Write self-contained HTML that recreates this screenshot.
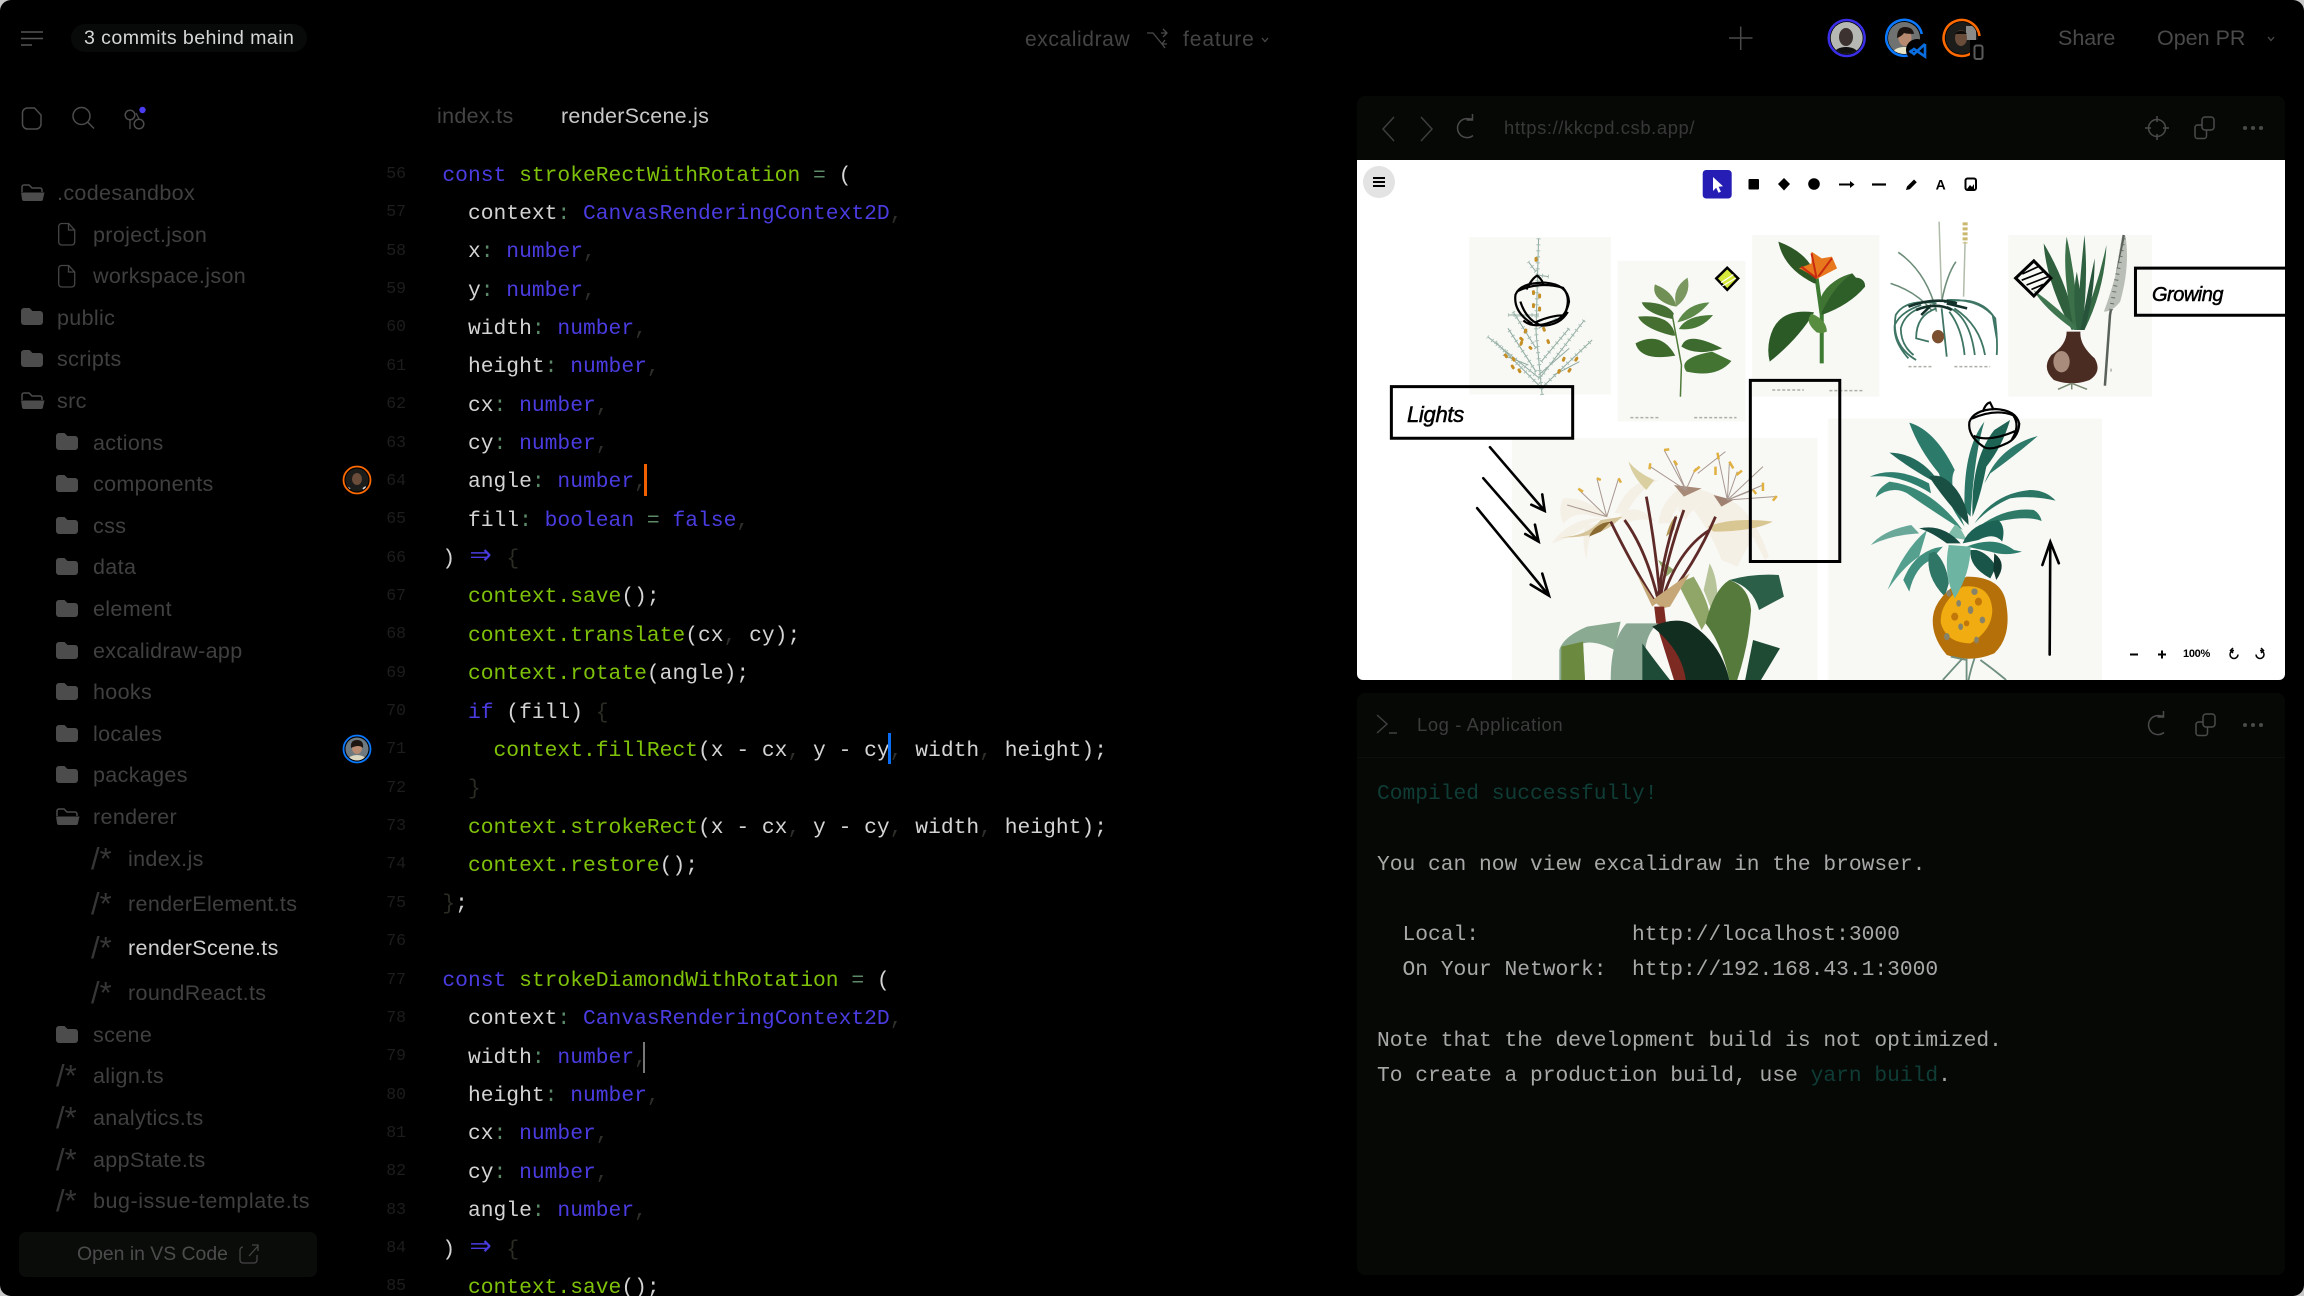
<!DOCTYPE html>
<html><head><meta charset="utf-8"><title>CodeSandbox</title>
<style>
*{margin:0;padding:0;box-sizing:border-box}
html,body{width:2304px;height:1296px;overflow:hidden;background:#c8c8c8}
#w{position:absolute;left:0;top:0;width:2304px;height:1296px;background:#000;border-radius:11px;overflow:hidden;font-family:"Liberation Sans",sans-serif}
.t{position:absolute;white-space:pre;line-height:30px;height:30px}
.s{font-size:21.5px;color:#404040;letter-spacing:.35px}
.i{font-size:31px;color:#363636}
pre{font-family:"Liberation Mono",monospace}
#code{position:absolute;left:442.4px;top:156.5px;font-size:21.3px;line-height:38.36px;color:#d4d4d4;white-space:pre}
#nums{position:absolute;left:376px;width:30px;top:155px;text-align:right;font-size:16.5px;line-height:38.36px;color:#1d1d1d;font-family:"Liberation Mono",monospace}
.k{color:#4a3ce0}.f{color:#7fc20a}.c{color:#2e2e2a}.d{color:#2c2c24}.o{color:#5c8a68}
.ar{display:inline-block;width:25.6px;text-align:center;color:#4a3ce0;font-size:36px;line-height:20px;vertical-align:-1px;overflow:visible}
.p{position:absolute;background:#060806;border-radius:8px}
#term{position:absolute;left:1377px;top:777.4px;font-size:21.25px;line-height:35.2px;color:#a8a8a8;white-space:pre}
.g{color:#0f3d36}
#prev{position:absolute;left:1357px;top:160px;width:928px;height:520px;background:#fff;overflow:hidden;border-radius:0 0 6px 6px}
#prev svg{position:absolute;overflow:hidden}
#prev svg *{vector-effect:non-scaling-stroke}
.z3{left:-7px;top:-10px;width:954px;height:540px}
.z9{left:3px;top:55px;width:800px;height:225px}
.z10{left:143px;top:250px;width:620px;height:270px}
.hw{position:absolute;font-family:"Liberation Sans",sans-serif;font-style:italic;color:#000;white-space:pre;-webkit-text-stroke:.5px #000}
#ic{position:absolute;left:0;top:0;width:2304px;height:1296px;pointer-events:none}
</style></head><body><div id="w">

<div class="t" style="left:70.5px;top:24px;width:236px;height:28px;background:#070a08;border-radius:14px"></div>
<div class="t" style="left:84px;top:23px;font-size:19.6px;color:#d6d6d6;letter-spacing:.42px">3 commits behind main</div>
<div class="t" style="left:1025px;top:25px;font-size:21px;color:#444;letter-spacing:.6px">excalidraw</div>
<div class="t" style="left:1183px;top:25px;font-size:21px;color:#444;letter-spacing:.9px">feature</div>
<div class="t" style="left:2058px;top:23px;font-size:21.5px;color:#4a4a4a">Share</div>
<div class="t" style="left:2157px;top:23px;font-size:21.5px;color:#4a4a4a">Open PR</div>

<div class="t" style="left:437px;top:101px;font-size:21.5px;color:#444;letter-spacing:.3px">index.ts</div>
<div class="t" style="left:561px;top:101px;font-size:21.5px;color:#c8c8c8;letter-spacing:.25px">renderScene.js</div>

<div class="t s" style="left:57px;top:178px">.codesandbox</div>
<div class="t s" style="left:93px;top:220px">project.json</div>
<div class="t s" style="left:93px;top:261px">workspace.json</div>
<div class="t s" style="left:57px;top:303px">public</div>
<div class="t s" style="left:57px;top:344px">scripts</div>
<div class="t s" style="left:57px;top:386px">src</div>
<div class="t s" style="left:93px;top:428px">actions</div>
<div class="t s" style="left:93px;top:469px">components</div>
<div class="t s" style="left:93px;top:511px">css</div>
<div class="t s" style="left:93px;top:552px">data</div>
<div class="t s" style="left:93px;top:594px">element</div>
<div class="t s" style="left:93px;top:636px">excalidraw-app</div>
<div class="t s" style="left:93px;top:677px">hooks</div>
<div class="t s" style="left:93px;top:719px">locales</div>
<div class="t s" style="left:93px;top:760px">packages</div>
<div class="t s" style="left:93px;top:802px">renderer</div>
<div class="t s" style="left:128px;top:844px">index.js</div>
<div class="t s" style="left:128px;top:889px">renderElement.ts</div>
<div class="t s" style="left:128px;top:933px;color:#d0d0d0">renderScene.ts</div>
<div class="t s" style="left:128px;top:978px">roundReact.ts</div>
<div class="t s" style="left:93px;top:1020px">scene</div>
<div class="t s" style="left:93px;top:1061px">align.ts</div>
<div class="t s" style="left:93px;top:1103px">analytics.ts</div>
<div class="t s" style="left:93px;top:1145px">appState.ts</div>
<div class="t s" style="left:93px;top:1186px;letter-spacing:.55px">bug-issue-template.ts</div>

<div class="t i" style="left:91px;top:844px">/*</div>
<div class="t i" style="left:91px;top:889px">/*</div>
<div class="t i" style="left:91px;top:933px">/*</div>
<div class="t i" style="left:91px;top:978px">/*</div>
<div class="t i" style="left:56px;top:1061px">/*</div>
<div class="t i" style="left:56px;top:1103px">/*</div>
<div class="t i" style="left:56px;top:1145px">/*</div>
<div class="t i" style="left:56px;top:1186px">/*</div>

<div class="t" style="left:19px;top:1232px;width:298px;height:45px;background:#0a0c0a;border-radius:7px"></div>
<div class="t" style="left:77px;top:1239px;font-size:19.4px;color:#4c4c4c">Open in VS Code</div>

<div id="nums">56
57
58
59
60
61
62
63
64
65
66
67
68
69
70
71
72
73
74
75
76
77
78
79
80
81
82
83
84
85</div>
<pre id="code"><span class="k">const</span> <span class="f">strokeRectWithRotation</span> <span class="o">=</span> (
  context<span class="o">:</span> <span class="k">CanvasRenderingContext2D</span><span class="c">,</span>
  x<span class="o">:</span> <span class="k">number</span><span class="c">,</span>
  y<span class="o">:</span> <span class="k">number</span><span class="c">,</span>
  width<span class="o">:</span> <span class="k">number</span><span class="c">,</span>
  height<span class="o">:</span> <span class="k">number</span><span class="c">,</span>
  cx<span class="o">:</span> <span class="k">number</span><span class="c">,</span>
  cy<span class="o">:</span> <span class="k">number</span><span class="c">,</span>
  angle<span class="o">:</span> <span class="k">number</span><span class="c">,</span>
  fill<span class="o">:</span> <span class="k">boolean</span> <span class="o">=</span> <span class="k">false</span><span class="c">,</span>
) <span class="ar">⇒</span> <span class="d">{</span>
  <span class="f">context.save</span>();
  <span class="f">context.translate</span>(cx<span class="c">,</span> cy);
  <span class="f">context.rotate</span>(angle);
  <span class="k">if</span> (fill) <span class="d">{</span>
    <span class="f">context.fillRect</span>(x - cx<span class="c">,</span> y - cy<span class="c">,</span> width<span class="c">,</span> height);
  <span class="d">}</span>
  <span class="f">context.strokeRect</span>(x - cx<span class="c">,</span> y - cy<span class="c">,</span> width<span class="c">,</span> height);
  <span class="f">context.restore</span>();
<span class="d">}</span>;

<span class="k">const</span> <span class="f">strokeDiamondWithRotation</span> <span class="o">=</span> (
  context<span class="o">:</span> <span class="k">CanvasRenderingContext2D</span><span class="c">,</span>
  width<span class="o">:</span> <span class="k">number</span><span class="c">,</span>
  height<span class="o">:</span> <span class="k">number</span><span class="c">,</span>
  cx<span class="o">:</span> <span class="k">number</span><span class="c">,</span>
  cy<span class="o">:</span> <span class="k">number</span><span class="c">,</span>
  angle<span class="o">:</span> <span class="k">number</span><span class="c">,</span>
) <span class="ar">⇒</span> <span class="d">{</span>
  <span class="f">context.save</span>();</pre>

<div class="t" style="left:644px;top:464px;width:3px;height:32px;background:#f06000"></div>
<div class="t" style="left:888px;top:733px;width:3px;height:31px;background:#0a6cf0"></div>
<div class="t" style="left:643px;top:1042px;width:2px;height:31px;background:#777"></div>

<div class="p" style="left:1357px;top:96px;width:928px;height:70px"></div>
<div class="t" style="left:1504px;top:113px;font-size:18.4px;color:#383838;letter-spacing:.6px">https://kkcpd.csb.app/</div>

<div id="prev">
<svg class="z3" viewBox="0 0 1568 1568" preserveAspectRatio="none">
<g fill="#f8f8f5"><rect x="196" y="253" width="233" height="457"/><rect x="440" y="322" width="210" height="466"/><rect x="661" y="247" width="209" height="469"/><rect x="1082" y="247" width="236" height="469"/><rect x="266" y="836" width="502" height="720"/><rect x="786" y="780" width="450" height="780"/></g>
</svg>

<svg class="z9" viewBox="0 0 1568 675" preserveAspectRatio="none">
<!-- plant 1 -->
<g fill="none" stroke="#8faaa0" stroke-width="1">
<path id="b1" d="M357 540L345 350L350 70M350 510L265 380M352 490L250 365M345 470L290 340M355 520L455 375M352 490L440 315M355 440L410 340M345 400L300 290M350 300L290 300M345 170L330 140M345 180L370 185M350 480L410 400M330 450L280 420M380 480L430 440M350 340L385 310"/>
</g>
<path d="M357 540L345 350L350 70M350 510L265 380M352 490L250 365M345 470L290 340M355 520L455 375M352 490L440 315M355 440L410 340M345 400L300 290M350 300L290 300M345 170L330 140M345 180L370 185" fill="none" stroke="#a4bdb2" stroke-width="4" stroke-dasharray="1 5"/>
<path d="M345 130V165M340 230V300M352 240V290M325 345L315 390M360 340L370 385M285 420L305 470M300 430L320 490M400 430L385 490M425 430L405 480M315 370L335 400" fill="none" stroke="#c58f25" stroke-width="3" stroke-linecap="round" stroke-dasharray="2 11"/>
<!-- plant 2 -->
<path d="M628 545L630 450L612 300" fill="none" stroke="#4f7a3a" stroke-width="1.5"/>
<path d="M610 272Q570 250 578 208Q615 230 620 275Z" fill="#6f8f55"/>
<path d="M620 275Q610 220 642 188Q650 240 620 275Z" fill="#7a9860"/>
<path d="M612 312Q560 295 552 262Q600 260 615 295Z" fill="#466f34"/>
<path d="M622 322Q640 265 685 262Q660 310 622 322Z" fill="#5d8a48"/>
<path d="M612 362Q555 340 545 305Q610 295 618 362Z" fill="#446f30"/>
<path d="M625 342Q640 300 692 300Q665 350 625 342Z" fill="#4a7a38"/>
<path d="M618 422Q550 440 540 385Q590 345 618 422Z" fill="#3e6a2c"/>
<path d="M630 395Q640 345 710 400Q660 425 630 395Z" fill="#3d6a2e"/>
<path d="M640 470Q620 430 690 410L728 438Q700 490 640 470Z" fill="#437432"/>
<g stroke="#aeaea8" stroke-width="1.500" stroke-dasharray="3 2"><path d="M530 608H585M655 608H738M808 525H870M920 527H985M1075 455H1120M1165 455H1235M1472 470V455"/></g>
<!-- plant 3 -->
<path d="M905 445V300L895 190" fill="none" stroke="#3d7a32" stroke-width="4"/>
<path d="M890 205Q830 160 820 80Q890 120 895 205Z" fill="#2d5826"/>
<path d="M895 192Q870 165 860 160L885 145L885 110L905 130L925 125L935 160Q910 180 895 192Z" fill="#e8781e"/>
<path d="M895 190L865 155M895 190L885 115M898 185L925 130" stroke="#c92a10" stroke-width="2" fill="none"/>
<path d="M905 300Q900 200 965 175L972 188Q990 190 990 215Q960 270 905 300Z" fill="#2f5f28"/>
<path d="M900 262Q910 200 965 175Q930 210 905 292Z" fill="#3f7433"/>
<path d="M890 292Q830 280 810 340Q795 390 803 440Q860 370 890 292Z" fill="#2c5a26"/>
<path d="M895 352Q870 320 885 296Q915 315 915 350L905 355Z" fill="#588d40"/>
<!-- plant 4 -->
<g fill="none" stroke="#b0bcaa" stroke-width="1.500"><path d="M1135 20L1140 250M1186 80L1183 245"/></g>
<path d="M1186 22V85" stroke="#c9b86e" stroke-width="5" stroke-dasharray="3 2"/>
<g fill="none" stroke="#6d8d7a" stroke-width="1.600"><path d="M1130 290Q1110 170 1055 112M1140 260Q1150 180 1168 140M1120 285Q1090 230 1040 205"/></g>
<g fill="none" stroke="#3f7565" stroke-width="1.800">
<path d="M1130 265Q1070 250 1050 300Q1040 390 1090 435M1125 270Q1070 280 1060 340Q1060 390 1085 420M1130 280Q1090 300 1090 370L1115 380M1100 270Q1060 290 1048 330Q1045 380 1075 430M1145 262Q1210 240 1240 300L1248 370M1150 255Q1215 250 1245 310Q1250 380 1248 420M1150 275Q1195 300 1205 420M1140 280L1150 425M1155 290Q1180 340 1185 420M1165 280Q1215 330 1225 420"/>
<path d="M1075 275Q1125 245 1170 265M1090 285Q1130 260 1160 285M1120 270L1100 300M1150 265L1190 280" stroke="#13302a" stroke-width="2.600"/>
</g>
<ellipse cx="1133" cy="365" rx="12" ry="20" fill="#7a5030"/>
<!-- plant 5 -->
<path d="M1395 345Q1345 200 1340 85Q1385 200 1405 340Z" fill="#2f5f3d"/>
<path d="M1400 345Q1375 180 1385 65Q1405 200 1408 345Z" fill="#3b7049"/>
<path d="M1405 345Q1410 200 1420 60Q1428 200 1415 345Z" fill="#2f6040"/>
<path d="M1410 345Q1445 220 1463 90Q1460 220 1420 345Z" fill="#356a45"/>
<path d="M1400 345Q1340 280 1320 225Q1370 280 1410 345Z" fill="#3f7650"/>
<path d="M1405 345Q1395 240 1405 170Q1415 250 1415 345Z" fill="#2f6040"/>
<path d="M1412 345Q1430 200 1440 130Q1440 240 1420 345Z" fill="#26533a"/>
<path d="M1385 350H1412Q1410 390 1440 430Q1455 470 1430 495Q1395 515 1360 495Q1335 460 1355 420Q1385 390 1385 350Z" fill="#4b2c22"/>
<ellipse cx="1375" cy="440" rx="16" ry="32" fill="#a98c7c"/>
<path d="M1395 505L1368 523M1395 505L1395 523M1395 505L1425 523" stroke="#7a8a70" stroke-width="1.500" fill="none"/>
<path d="M1460 512L1470 300L1497 60" stroke="#59615a" stroke-width="2.500" fill="none"/>
<path d="M1458 290Q1480 200 1500 60Q1510 150 1490 260Q1475 290 1458 290Z" fill="#b9bfb6"/>
<path d="M1472 285L1497 70" stroke="#666e66" stroke-width="4" stroke-dasharray="1 5" fill="none"/>
</svg>

<svg class="z10" viewBox="0 0 1568 810" preserveAspectRatio="none">
<!-- lily -->
<g fill="#f5f0e5">
<path d="M280 325Q220 260 160 265Q145 300 160 340Q190 300 240 320Z"/>
<path d="M260 325Q180 320 130 400Q190 380 230 340Z"/>
<path d="M270 330Q220 350 220 450Q205 400 215 350Z"/>
<path d="M290 310Q330 200 400 210Q350 240 320 310Z"/>
<path d="M300 320Q340 270 395 335Q350 320 320 340Z"/>
<path d="M400 340Q410 260 470 225Q500 240 495 260Q440 280 430 340Z" />
<path d="M450 300Q470 220 510 240L560 260Q490 280 470 330Z"/>
<path d="M490 300Q540 250 580 270Q640 300 680 440L670 450L640 380L600 470L560 450Q540 380 490 300Z"/>
</g>
<path d="M150 382Q220 380 255 330L310 320L285 345Q240 385 150 382Z" fill="#d6c49a"/>
<path d="M225 380Q240 340 280 335L255 365Z" fill="#8a6a30"/>
<path d="M325 155Q335 200 370 240L390 210Q350 190 325 155Z" fill="#d9cfa0"/>
<path d="M525 350Q590 320 690 335Q640 365 540 365Z" fill="#d9c793"/>
<path d="M420 380Q430 330 448 315L440 360Z" fill="#b59a5a"/>
<path d="M440 225L510 235L465 260Z" fill="#a88a78"/><path d="M540 255L590 270L560 290Z" fill="#a08070"/>
<g fill="none" stroke="#a89890" stroke-width="1">
<path d="M270 320L200 240M270 320L245 205M270 320L300 205M270 320L170 285M270 320L200 295M470 240L415 120M470 240L440 155M470 240L380 170M470 240L495 175M575 270L550 130M575 270L580 160M575 270L600 185M575 270L665 170M575 270L695 260M575 270L640 240M575 270L665 225M500 190L570 125"/>
</g>
<g stroke="#e0b040" stroke-width="2.500" fill="none"><path d="M415 120L428 118M380 160L378 178M440 152L448 165M490 185L505 170M550 128L553 148M580 155L590 175M598 195L612 182M665 218V243M690 272L700 258M640 240L648 252M245 205L255 210M300 205L306 218M198 236L210 245M545 170V195"/></g>
<path d="M450 520L490 500Q530 580 530 620L510 660Q480 590 450 520Z" fill="#8fa668"/>
<path d="M515 540L530 460Q550 500 550 570L535 600Z" fill="#b7c49a"/>
<path d="M520 640Q540 540 580 510Q630 530 635 600Q630 700 600 810H580Q560 700 520 640Z" fill="#567a3c"/>
<path d="M580 510Q640 490 705 495L718 560L655 600Q640 530 580 510Z" fill="#2c5f48"/>
<path d="M400 450Q430 470 440 480L420 500Z" fill="#8fa668"/>
<g fill="none" stroke="#5e2a28" stroke-width="2.800">
<path d="M280 335Q340 480 395 580M315 330Q370 420 400 570M370 260Q395 420 405 570M465 300Q420 450 405 570M445 320Q410 450 400 570M530 360Q450 420 410 570M545 320Q490 470 415 575"/>
</g>
<path d="M385 570Q420 540 480 490L430 590L410 595ZM345 490L395 580L385 590Z" fill="#c6a878"/>
<path d="M390 590H415L420 640L480 810H440L395 640Z" fill="#7c2a22"/>
<path d="M150 810V720Q160 680 220 650L305 635L290 720Q240 690 210 700L215 810Z" fill="#8aab92"/>
<path d="M155 810V710L210 695L215 810Z" fill="#6b8a3f"/>
<path d="M280 810Q280 690 320 640L400 640Q350 690 375 810Z" fill="#88a692"/>
<path d="M360 700Q390 750 430 810H360Z" fill="#1e4a38"/>
<path d="M385 650Q440 620 480 640Q560 700 580 810H470Q460 720 385 650Z" fill="#122e20"/>
<path d="M620 810L640 690L708 715L660 810Z" fill="#1f4a34"/>

<!-- pineapple -->
<path d="M1175 350Q1130 220 1150 180Q1100 60 1035 38Q1060 120 1110 190Q1130 280 1175 350Z" fill="#2b7a6a"/>
<path d="M1110 215Q1060 130 985 128Q1030 170 1090 210Z" fill="#236b5c"/>
<path d="M1085 220Q1000 165 935 200Q1010 190 1090 250Z" fill="#2f7f6f"/>
<path d="M1170 360Q1090 230 985 215Q955 235 950 262Q990 225 1030 250Q1090 300 1170 360Z" fill="#3b8a78"/>
<path d="M1225 220Q1260 110 1360 78Q1310 130 1240 190Z" fill="#2d7a6a"/>
<path d="M1175 300Q1170 120 1225 35Q1200 130 1190 320Z" fill="#2a7565"/>
<path d="M1195 320Q1190 150 1250 60L1290 30Q1270 110 1230 170Q1215 260 1195 320Z" fill="#1e6455"/>
<path d="M1085 200Q1120 185 1155 240Q1185 290 1185 345Q1130 280 1085 200Z" fill="#1a5044"/>
<path d="M1200 340Q1250 250 1340 240Q1380 240 1405 272Q1340 255 1290 265Q1240 290 1200 340Z" fill="#2b7565"/>
<path d="M1210 350Q1280 290 1350 300Q1365 310 1370 333Q1320 310 1210 350Z" fill="#2e7a67"/>
<path d="M1040 345Q970 360 938 405Q990 375 1060 370Z" fill="#6aa99a"/>
<path d="M1150 345Q1160 340 1180 390L1130 380Z" fill="#7fbdaa"/>
<path d="M1080 360Q1020 420 980 540Q1020 470 1060 440Z" fill="#55a08f"/>
<path d="M1120 410Q1050 420 1020 510L1035 545Q1050 470 1090 450Z" fill="#418f7e"/>
<path d="M1060 355Q1120 340 1165 400L1130 400Q1090 365 1060 355Z" fill="#174c42"/>
<path d="M1170 400Q1190 340 1260 330Q1280 350 1270 395Q1250 365 1210 390Z" fill="#1d6355"/>
<path d="M1180 410Q1250 375 1300 420L1320 425Q1280 440 1240 425Z" fill="#2f7d6c"/>
<path d="M1085 430Q1075 500 1125 560L1135 520Q1130 460 1100 425Z" fill="#2f7667"/>
<path d="M1190 420Q1185 470 1240 505L1255 470Q1235 430 1205 420Z" fill="#1a5549"/>
<path d="M1250 430Q1285 460 1255 510L1248 480Z" fill="#12392f"/>
<path d="M1180 500Q1270 500 1280 580Q1295 680 1250 730Q1190 760 1130 735Q1090 680 1095 620Q1100 560 1180 500Z" fill="#b5700a"/>
<path d="M1170 530Q1240 520 1245 600Q1245 660 1190 700Q1130 700 1115 640Q1110 580 1170 530Z" fill="#f0ac10"/>
<path d="M1135 405L1190 410Q1190 490 1150 565Q1120 490 1135 405Z" fill="#6db5a2"/>
<g fill="#87836a"><ellipse cx="1135" cy="550" rx="6" ry="10"/><ellipse cx="1200" cy="545" rx="8" ry="10"/><ellipse cx="1160" cy="580" rx="6" ry="10"/><ellipse cx="1190" cy="600" rx="7" ry="12"/><ellipse cx="1220" cy="630" rx="7" ry="10"/><ellipse cx="1165" cy="650" rx="6" ry="10"/><ellipse cx="1130" cy="680" rx="7" ry="11"/><ellipse cx="1205" cy="690" rx="6" ry="10"/></g>
<g fill="#c2770a"><ellipse cx="1150" cy="620" rx="9" ry="12"/><ellipse cx="1210" cy="575" rx="9" ry="12"/><ellipse cx="1180" cy="640" rx="7" ry="9"/></g>
<path d="M1170 745Q1150 770 1120 810M1180 745V810M1200 745Q1190 780 1185 810M1215 750Q1250 780 1280 810M1140 740L1180 750" stroke="#6f8f80" stroke-width="1.800" fill="none"/>
</svg>

<svg class="z3" viewBox="0 0 1568 1568" preserveAspectRatio="none">
<!-- diamond yellow -->
<path d="M620 342L638 373L620 406L602 373Z" fill="#d6e83a" stroke="#000" stroke-width="2.500"/>
<path d="M610 385L630 362M612 395L634 372" stroke="#fff" stroke-width="1.200"/>
<!-- diamond hatch -->
<path d="M1124 322L1152 372L1124 424L1094 372Z" fill="none" stroke="#000" stroke-width="3"/>
<path d="M1105 360L1132 338M1104 378L1142 352M1112 392L1147 368M1120 405L1140 390" stroke="#000" stroke-width="1.700"/>
<g fill="none" stroke="#000">
<path d="M68 687H366V837H68Z" stroke-width="3"/>
<path d="M1291 343H1540V480H1291Z" stroke-width="3"/>
<path d="M658 669H805V1195H658Z" stroke-width="3"/>
<g stroke-width="2.600" stroke-linecap="round">
<path d="M230 863L320 1048M298 1030L320 1048L316 1000"/>
<path d="M219 953L310 1137M288 1115L310 1137L304 1088"/>
<path d="M209 1040L327 1294M297 1262L327 1294L316 1230"/>
<path d="M1150 1465L1151 1138M1138 1205L1151 1138L1165 1200"/>
</g>
<g stroke-width="2.200">
<path d="M300 505Q268 470 272 420Q280 385 320 385Q358 390 360 440Q355 490 330 500Q300 520 285 495"/>
<path d="M290 405Q300 370 308 365Q318 380 318 395M280 440Q290 495 315 510Q345 510 358 470M275 410Q310 380 350 400Q365 430 352 480Q330 480 305 500"/>
<path d="M1040 860Q1015 830 1018 790Q1025 755 1060 752Q1095 755 1100 795Q1098 840 1075 855Q1050 875 1040 860Z"/>
<path d="M1040 760Q1045 735 1052 733L1058 755M1025 830Q1050 850 1095 815M1022 780Q1060 750 1090 770Q1102 800 1088 840"/>
</g>
</g>
</svg>
<div class="hw" style="left:50px;top:242px;font-size:22px;line-height:26px;letter-spacing:-.3px">Lights</div>
<div class="hw" style="left:795px;top:122px;font-size:20px;line-height:26px;letter-spacing:-.5px">Growing</div>
<div class="hw" style="left:826px;top:486px;font-size:11px;line-height:16px;font-style:normal;font-weight:bold;-webkit-text-stroke:0;letter-spacing:-.3px">100%</div>
</div>

<div class="p" style="left:1357px;top:693px;width:928px;height:582px"></div>
<div class="t" style="left:1357px;top:757px;width:928px;height:1px;background:#0c0f0c"></div>
<div class="t" style="left:1417px;top:710px;font-size:18.4px;color:#3c3c3c;letter-spacing:.6px">Log - Application</div>
<pre id="term"><span class="g">Compiled successfully!</span>

You can now view excalidraw in the browser.

  Local:            http://localhost:3000
  On Your Network:  http://192.168.43.1:3000

Note that the development build is not optimized.
To create a production build, use <span class="g">yarn build</span>.</pre>

<svg id="ic" viewBox="0 0 2304 1296" fill="none">
<defs>
<path id="fc" d="M0 3a3 3 0 0 1 3-3h5.500l3 3h7.500a3 3 0 0 1 3 3v8a3 3 0 0 1-3 3H3a3 3 0 0 1-3-3z" fill="#4c4c4c"/>
<g id="fo"><path d="M1 8V3a2 2 0 0 1 2-2h5l3 3h8a2 2 0 0 1 2 2v2" stroke="#4c4c4c" stroke-width="1.500"/><path d="M0 8.500h23.500l-1.500 6.500a2 2 0 0 1-2 2H3a2 2 0 0 1-2-2z" fill="#4c4c4c"/></g>
<path id="fl" d="M.7 3.500a3 3 0 0 1 3-3h7l6 6.500v12a3 3 0 0 1-3 3h-10a3 3 0 0 1-3-3zM10.500 .5v6.500h6.500" stroke="#454545" stroke-width="1.300"/>
<g id="cp" stroke="#4a4a4a" stroke-width="1.500"><rect x="8" y="-1" width="12" height="13" rx="3"/><path d="M8 7H3.500a2.500 2.500 0 0 0-2.500 2.500V18a2.500 2.500 0 0 0 2.500 2.500H10a2.500 2.500 0 0 0 2.500-2.500V12"/></g>
<g id="rf" stroke="#4a4a4a" stroke-width="1.500"><path d="M9 -9a9.500 9.500 0 1 0 1 15.500"/><path d="M4 -10h6M9.500 -15v6h-6"/></g>
<g id="dt" fill="#4a4a4a"><circle cx="-8" r="2"/><circle r="2"/><circle cx="8" r="2"/></g>
<clipPath id="a1"><circle cx="1846.700" cy="38" r="16"/></clipPath>
<clipPath id="a2"><circle cx="1904" cy="38" r="16"/></clipPath>
<clipPath id="a3"><circle cx="1961.700" cy="38" r="16"/></clipPath>
<clipPath id="a4"><circle cx="357" cy="480" r="11.500"/></clipPath>
<clipPath id="a5"><circle cx="357" cy="749" r="11.500"/></clipPath>
</defs>

<path d="M21 32H43M21 38.500H43M21 45H32" stroke="#555" stroke-width="1.600"/>
<path d="M22.500 113a5 5 0 0 1 5-5h7l6.500 7v9a5 5 0 0 1-5 5h-8.500a5 5 0 0 1-5-5z" stroke="#4c4c4c" stroke-width="1.500"/>
<circle cx="81.500" cy="116" r="8.500" stroke="#4c4c4c" stroke-width="1.500"/><path d="M87.500 122L94 128.500" stroke="#4c4c4c" stroke-width="1.500"/>
<circle cx="130" cy="115" r="4.800" stroke="#4c4c4c" stroke-width="1.500"/><circle cx="139" cy="124" r="4.800" stroke="#4c4c4c" stroke-width="1.500"/><path d="M130 120V129M139 119L136 113" stroke="#4c4c4c" stroke-width="1.300"/>
<circle cx="142.500" cy="110" r="3.200" fill="#4a3cf0"/>

<use href="#fo" x="21" y="184"/>
<use href="#fl" x="58" y="223"/><use href="#fl" x="58" y="265"/>
<use href="#fc" x="21" y="308"/><use href="#fc" x="21" y="350"/>
<use href="#fo" x="21" y="392"/>
<use href="#fc" x="56" y="433"/><use href="#fc" x="56" y="475"/><use href="#fc" x="56" y="517"/><use href="#fc" x="56" y="558"/><use href="#fc" x="56" y="600"/><use href="#fc" x="56" y="642"/><use href="#fc" x="56" y="683"/><use href="#fc" x="56" y="725"/><use href="#fc" x="56" y="766"/>
<use href="#fo" x="56" y="808"/>
<use href="#fc" x="56" y="1026"/>

<path d="M243 1247a3 3 0 0 0-3 3v10a3 3 0 0 0 3 3h11a3 3 0 0 0 3-3v-5M249 1256l9-10M252 1245h6v6" stroke="#444" stroke-width="1.300"/>

<!-- branch + chevrons -->
<path d="M1147 33h6l9 11h5M1161 33h6M1165 40l-3 4 3 4M1163 29l4 4-4 4" stroke="#4a4a4a" stroke-width="1.300"/>
<path d="M1262 38l3 3.500 3-3.500" stroke="#4a4a4a" stroke-width="1.300"/>
<path d="M2268 37l3 3.500 3-3.500" stroke="#4a4a4a" stroke-width="1.300"/>
<path d="M1729 38h23.500M1740.700 26.500v23.500" stroke="#4a4a4a" stroke-width="1.500"/>

<!-- avatars -->
<g clip-path="url(#a1)"><rect x="1830" y="22" width="34" height="32" fill="#b6b8b4"/><ellipse cx="1846" cy="37" rx="7" ry="9" fill="#3c3230"/><path d="M1832 56q3-9 14-9t14 9z" fill="#101010"/></g>
<circle cx="1846.700" cy="38" r="18" stroke="#3a2ee8" stroke-width="2.500"/>
<g clip-path="url(#a2)"><rect x="1888" y="22" width="34" height="32" fill="#6f7270"/><ellipse cx="1905" cy="38" rx="6.500" ry="8" fill="#b88a70"/><path d="M1897 38q0-11 8-11t9 7q-7 0-10-1q-2 3-7 5z" fill="#1d1512"/><path d="M1890 56q4-9 14-9t12 9z" fill="#e8e4c8"/></g>
<path d="M1917 50.500A18 18 0 1 1 1921.800 34" stroke="#0a78ff" stroke-width="2.500"/>
<circle cx="1917" cy="50" r="11" fill="#000"/>
<path d="M1925 44l-11 10-4.500-3.500M1925 44v12.500l-11-7.500-4.500 3.500" stroke="#0a6ee0" stroke-width="2.600"/>
<g clip-path="url(#a3)"><rect x="1945" y="22" width="34" height="32" fill="#1c1c1a"/><rect x="1966" y="26" width="10" height="14" fill="#8a8a88"/><ellipse cx="1961" cy="38" rx="6" ry="8" fill="#6a4c3a"/><path d="M1955 34q6-7 12 0z" fill="#0e0c0a"/></g>
<path d="M1974 51A18 18 0 1 1 1979.500 36" stroke="#ff6a00" stroke-width="2.500"/>
<rect x="1970" y="40" width="20" height="22" fill="#000"/>
<rect x="1974.500" y="45.500" width="8" height="13.500" rx="2" stroke="#5a5a5a" stroke-width="2"/>

<g clip-path="url(#a4)"><rect x="345" y="468" width="24" height="24" fill="#1c1c1a"/><ellipse cx="357" cy="479" rx="5" ry="6" fill="#6a4c3a"/><path d="M346 487l4 2M366 487l-3 2" stroke="#ddd" stroke-width="2"/></g>
<circle cx="357" cy="480" r="13.500" stroke="#ff6a00" stroke-width="1.800"/>
<g clip-path="url(#a5)"><rect x="345" y="737" width="24" height="24" fill="#6f7a80"/><ellipse cx="357" cy="748" rx="5" ry="6" fill="#b88a70"/><path d="M351 748q-1-8 6-8t6 8q-4-4-12 0z" fill="#1d1512"/><path d="M346 762q3-7 11-7t11 7z" fill="#dcd8c0"/></g>
<circle cx="357" cy="749" r="13.500" stroke="#0a78ff" stroke-width="1.800"/>

<!-- browser header -->
<path d="M1394 117l-11 12 11 12M1421 117l11 12-11 12" stroke="#3e3e3e" stroke-width="1.500"/>
<g transform="translate(1463 129)"><use href="#rf"/></g>
<g stroke="#4a4a4a" stroke-width="1.500"><circle cx="2157" cy="128" r="8.500"/><path d="M2157 116v6M2157 134v6M2145 128h6M2163 128h6"/></g>
<use href="#cp" x="2194" y="118"/>
<use href="#dt" x="2253" y="128"/>

<!-- log header -->
<path d="M1377 715l10 9-10 9M1389 733h8" stroke="#404040" stroke-width="1.400"/>
<g transform="translate(2154 726)"><use href="#rf"/></g>
<use href="#cp" x="2195" y="715"/>
<use href="#dt" x="2253" y="725"/>

<!-- excalidraw toolbar -->
<rect x="1702.700" y="170" width="29" height="28.500" rx="3.500" fill="#261eb4"/>
<path d="M1713 177l0 14 3.200-3.200 2.300 5 2.400-1-2.300-5 4.400-.5z" fill="#fff"/>
<rect x="1748.500" y="179" width="10.500" height="10.500" rx="1" fill="#000"/>
<path d="M1784 178l6 6-6 6.500-6-6.500z" fill="#000"/>
<circle cx="1814" cy="184" r="5.800" fill="#000"/>
<path d="M1839 184.500h13" stroke="#000" stroke-width="2"/><path d="M1850 181l4.500 3.500-4.500 3.500z" fill="#000"/>
<path d="M1872 184.500h14" stroke="#000" stroke-width="2.200"/>
<path d="M1906 190l1-3.500 7-7 2.800 2.800-7 7z" fill="#000"/>
<text x="1940.700" y="189.500" text-anchor="middle" font-family="Liberation Sans" font-weight="bold" font-size="14" fill="#000">A</text>
<rect x="1965.500" y="178.500" width="10.500" height="11.500" rx="2" stroke="#000" stroke-width="2"/><path d="M1967 189l3-4 2 2 2-3v5z" fill="#000"/>
<!-- menu button -->
<circle cx="1379" cy="182" r="16" fill="#e3e3e3"/>
<path d="M1373 178h12M1373 182h12M1373 186h12" stroke="#000" stroke-width="2"/>
<!-- zoom controls -->
<path d="M2130 654.500h8M2158 654.500h8M2162 650.500v8" stroke="#000" stroke-width="2"/>
<path d="M2238 654.500a4 4 0 1 1-4-4h-2M2233 648l-2.500 2.500 2.500 2.500" stroke="#000" stroke-width="1.500"/>
<path d="M2256 654.500a4 4 0 1 0 4-4h2M2261 648l2.500 2.500-2.500 2.500" stroke="#000" stroke-width="1.500"/>
</svg>
</div></body></html>
